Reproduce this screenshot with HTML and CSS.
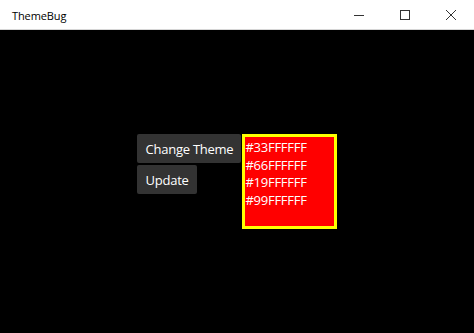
FILE: index.html
```html
<!DOCTYPE html>
<html lang="en">
<head>
    <meta charset="utf-8">
    <title>ThemeBug</title>
    <link rel="stylesheet" href="styles.css">
</head>
<body>
    <div id="window">
        <div class="titlebar">
            <span class="title">ThemeBug</span>
            <div class="controls">
                <span class="ctl">
                    <svg width="12" height="12" viewBox="0 0 12 12"><path d="M1 6.5h10" stroke="#333" stroke-width="1" fill="none"/></svg>
                </span>
                <span class="ctl">
                    <svg width="12" height="12" viewBox="0 0 12 12"><rect x="1.5" y="1.5" width="9" height="9" stroke="#333" stroke-width="1" fill="none"/></svg>
                </span>
                <span class="ctl">
                    <svg width="12" height="12" viewBox="0 0 12 12"><path d="M1 1l10 10M11 1L1 11" stroke="#333" stroke-width="1" fill="none"/></svg>
                </span>
            </div>
        </div>

        <div class="content">
            <div class="panel">
                <div class="buttons">
                    <button class="btn">Change Theme</button>
                    <button class="btn">Update</button>
                </div>
                <div class="colors">
                    <div>#33FFFFFF</div>
                    <div>#66FFFFFF</div>
                    <div>#19FFFFFF</div>
                    <div>#99FFFFFF</div>
                </div>
            </div>
        </div>
    </div>
</body>
</html>
```

FILE: styles.css
```css
html, body {
    margin: 0;
    height: 100%;
}
body {
    font-family: "Open Sans", "Noto Sans", sans-serif;
    background: #000;
}
#window {
    display: flex;
    flex-direction: column;
    height: 100%;
}
.titlebar {
    height: 29px;
    background: #fff;
    border-bottom: 1px solid #d6d6d6;
    display: flex;
    align-items: center;
    justify-content: space-between;
}
.title {
    font-size: 11px;
    letter-spacing: -0.1px;
    color: #000;
    padding-left: 12px;
    padding-top: 1px;
}
.controls {
    display: flex;
    height: 100%;
}
.ctl {
    width: 46px;
    display: flex;
    align-items: center;
    justify-content: center;
}
.content {
    flex: 1;
    display: flex;
    align-items: center;
    justify-content: center;
}
.panel {
    display: flex;
    align-items: flex-start;
    gap: 1px;
}
.buttons {
    display: flex;
    flex-direction: column;
    align-items: flex-start;
    gap: 2px;
}
.btn {
    font-family: "Open Sans", "Noto Sans", sans-serif;
    font-size: 13px;
    letter-spacing: -0.25px;
    color: #fff;
    background: #333;
    border: 0;
    border-radius: 2px;
    height: 29px;
    padding: 0 8px 0 9px;
    margin: 0;
}
.colors {
    width: 89px;
    height: 87px;
    padding-top: 2px;
    background: #f00;
    border: 3px solid #ff0;
    color: #fff;
    font-size: 13px;
    letter-spacing: -0.25px;
    line-height: 17.6px;
}
```
